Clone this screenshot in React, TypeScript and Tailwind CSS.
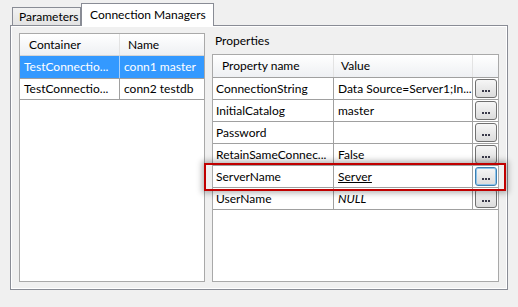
import React from "react";

const rows = [
  { name: "ConnectionString", value: "Data Source=Server1;In...", style: "" },
  { name: "InitialCatalog", value: "master", style: "" },
  { name: "Password", value: "", style: "" },
  { name: "RetainSameConnec...", value: "False", style: "" },
  { name: "ServerName", value: "Server", style: "underline", focused: true },
  { name: "UserName", value: "NULL", style: "italic" },
];

function DotsButton({ focused }: { focused?: boolean }) {
  return (
    <div
      className={`mx-auto mt-[1px] flex h-[19px] w-[22px] items-end justify-center gap-[1px] rounded-[3px] border bg-gradient-to-b from-[#f6f6f6] to-[#dcdcdc] pb-[5px] ${
        focused ? "border-[#3c7fb1] shadow-[inset_0_0_0_1px_#8fc3ea]" : "border-[#707070]"
      }`}
    >
      <span className="h-[2px] w-[2px] bg-[#3a3a4a]" />
      <span className="h-[2px] w-[2px] bg-[#3a3a4a]" />
      <span className="h-[2px] w-[2px] bg-[#3a3a4a]" />
    </div>
  );
}

export default function App() {
  return (
    <div className="relative h-[307px] w-[518px] overflow-hidden bg-[#f0f0f0] font-['Segoe_UI','Lato',sans-serif] text-[12px] text-black">
      {/* Tabs */}
      <div className="flex h-[25px] items-end pl-[12px]">
        <div className="flex h-[18px] w-[69px] items-center whitespace-nowrap border-x border-t border-[#898c95] bg-gradient-to-b from-[#f2f2f2] to-[#e3e3e3] pl-[6px] leading-[16px]">
          Parameters
        </div>
        <div className="relative z-10 mb-[-1px] flex h-[23px] w-[133px] items-start whitespace-nowrap border-x border-t border-[#898c95] bg-white pl-[8px] pt-[3px] leading-[16px]">
          Connection Managers
        </div>
      </div>

      {/* Tab page */}
      <div className="ml-[10px] h-[265px] w-[498px] border border-[#898c95]">
        <div className="flex h-full border border-white px-[7px] pt-[6px] pb-[6px]">
          {/* Left list */}
          <div className="h-[249px] w-[186px] border border-[#a9a9a9] bg-white">
            <div className="flex h-[22px] border-b border-[#d5d5d5] bg-gradient-to-b from-white to-[#eef0f3] leading-[21px]">
              <div className="w-[100px] border-r border-[#e3e3e3] pl-[9px]">Container</div>
              <div className="flex-1 pl-[8px]">Name</div>
            </div>
            <div className="flex h-[22px] bg-[#3399ff] leading-[21px] text-white">
              <div className="w-[100px] whitespace-nowrap border-r border-[#a8d0fb] pl-[4px]">TestConnectio...</div>
              <div className="flex-1 whitespace-nowrap pl-[4px]">conn1 master</div>
            </div>
            <div className="flex h-[22px] border-y border-[#a0a0a0] leading-[20px]">
              <div className="w-[100px] whitespace-nowrap border-r border-[#a0a0a0] pl-[4px]">TestConnectio...</div>
              <div className="flex-1 whitespace-nowrap pl-[4px]">conn2 testdb</div>
            </div>
          </div>

          {/* Right: properties */}
          <div className="ml-[7px] flex w-[287px] flex-col">
            <div className="h-[21px] pl-[3px] leading-[16px]">Properties</div>
            <div className="h-[228px] border border-[#a9a9a9] bg-white">
              <div className="flex h-[23px] border-b border-[#a0a0a0] bg-gradient-to-b from-white to-[#eef0f3] leading-[22px]">
                <div className="w-[121px] border-r border-[#e3e3e3] pl-[9px]">Property name</div>
                <div className="w-[139px] border-r border-[#e3e3e3] pl-[7px]">Value</div>
                <div className="flex-1" />
              </div>
              {rows.map((r) => (
                <div key={r.name} className="flex h-[22px] border-b border-[#a0a0a0] leading-[21px]">
                  <div className="w-[121px] overflow-hidden whitespace-nowrap border-r border-[#a0a0a0] pl-[3px]">{r.name}</div>
                  <div className={`w-[139px] overflow-hidden whitespace-nowrap border-r border-[#a0a0a0] pl-[4px] ${r.style}`}>{r.value}</div>
                  <div className="flex-1">
                    <DotsButton focused={r.focused} />
                  </div>
                </div>
              ))}
            </div>
          </div>
        </div>
      </div>

      {/* Highlight annotation */}
      <div className="absolute left-[204px] top-[163px] h-[28px] w-[302px] border-2 border-[#c00000] shadow-[0_0_6px_2px_rgba(0,0,0,0.3)]" />
    </div>
  );
}
